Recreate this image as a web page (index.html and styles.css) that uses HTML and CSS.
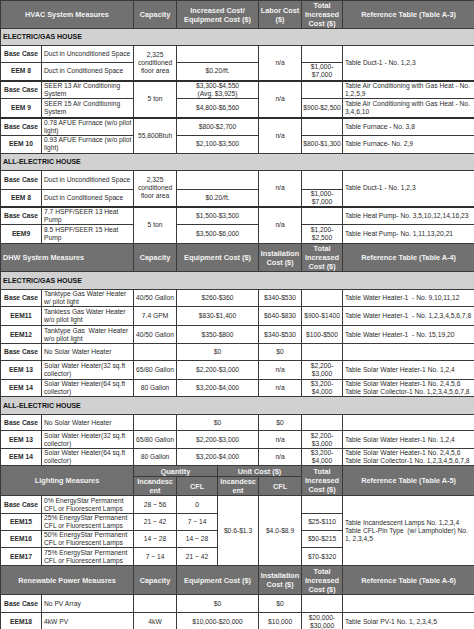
FILE: index.html
```html
<!DOCTYPE html>
<html>
<head>
<meta charset="utf-8">
<link rel="stylesheet" href="styles.css">
</head>
<body>
<table class="sheet">
<colgroup><col class="c1"><col class="c2"><col class="c3"><col class="c4a"><col class="c4b"><col class="c5"><col class="c6"><col class="c7"></colgroup>
<tbody>
<tr class="hd h28"><th colspan="2">HVAC System Measures</th><th>Capacity</th><th colspan="2">Increased Cost/<br>Equipment Cost ($)</th><th>Labor Cost<br>($)</th><th>Total<br>Increased<br>Cost ($)</th><th>Reference Table (Table A-3)</th></tr>
<tr class="sec h17"><td colspan="8">ELECTRIC/GAS HOUSE</td></tr>
<tr class="h17"><td class="id">Base Case</td><td class="desc">Duct in Unconditioned Space</td><td rowspan="2">2,325<br>conditioned<br>floor area</td><td colspan="2"></td><td rowspan="2">n/a</td><td></td><td rowspan="2" class="ref">Table Duct-1 - No. 1,2,3</td></tr>
<tr class="h18"><td class="id">EEM 8</td><td class="desc">Duct in Conditioned Space</td><td colspan="2">$0.20/ft.</td><td>$1,000-<br>$7,000</td></tr>
<tr class="h18 grp"><td class="id">Base Case</td><td class="desc">SEER 13 Air Conditioning<br>System</td><td rowspan="2">5 ton</td><td colspan="2">$3,300-$4,550<br>(Avg. $3,925)</td><td rowspan="2">n/a</td><td></td><td class="ref">Table Air Conditioning with Gas Heat - No.<br>1,2,5,9</td></tr>
<tr class="h19"><td class="id">EEM 9</td><td class="desc">SEER 15 Air Conditioning<br>System</td><td colspan="2">$4,800-$6,560</td><td>$900-$2,500</td><td class="ref">Table Air Conditioning with Gas Heat - No.<br>3,4,6,10</td></tr>
<tr class="h17 grp"><td class="id">Base Case</td><td class="desc">0.78 AFUE Furnace (w/o pilot<br>light)</td><td rowspan="2">55,800Btuh</td><td colspan="2">$800-$2,700</td><td rowspan="2">n/a</td><td></td><td class="ref">Table Furnace - No. 3,8</td></tr>
<tr class="h18"><td class="id">EEM 10</td><td class="desc">0.93 AFUE Furnace (w/o pilot<br>light)</td><td colspan="2">$2,100-$3,500</td><td>$800-$1,300</td><td class="ref">Table Furnace- No. 2,9</td></tr>
<tr class="sec h17"><td colspan="8">ALL-ELECTRIC HOUSE</td></tr>
<tr class="h19"><td class="id">Base Case</td><td class="desc">Duct in Unconditioned Space</td><td rowspan="2">2,325<br>conditioned<br>floor area</td><td colspan="2"></td><td rowspan="2">n/a</td><td></td><td rowspan="2" class="ref">Table Duct-1 - No. 1,2,3</td></tr>
<tr class="h17"><td class="id">EEM 8</td><td class="desc">Duct in Conditioned Space</td><td colspan="2">$0.20/ft.</td><td>$1,000-<br>$7,000</td></tr>
<tr class="h18 grp"><td class="id">Base Case</td><td class="desc">7.7 HSPF/SEER 13 Heat<br>Pump</td><td rowspan="2">5 ton</td><td colspan="2">$1,500-$3,500</td><td rowspan="2">n/a</td><td></td><td class="ref">Table Heat Pump- No. 3,5,10,12,14,16,23</td></tr>
<tr class="h19"><td class="id">EEM9</td><td class="desc">8.5 HSPF/SEER 15 Heat<br>Pump</td><td colspan="2">$3,500-$6,000</td><td>$1,200-<br>$2,500</td><td class="ref">Table Heat Pump- No. 1,11,13,20,21</td></tr>
<tr class="hd h27"><th colspan="2" class="left">DHW System Measures</th><th>Capacity</th><th colspan="2">Equipment Cost ($)</th><th>Installation<br>Cost ($)</th><th>Total<br>Increased<br>Cost ($)</th><th>Reference Table (Table A-4)</th></tr>
<tr class="sec h18"><td colspan="8">ELECTRIC/GAS HOUSE</td></tr>
<tr class="h17"><td class="id">Base Case</td><td class="desc">Tanktype Gas Water Heater<br>w/ pilot light</td><td>40/50 Gallon</td><td colspan="2">$260-$360</td><td>$340-$530</td><td></td><td class="ref">Table Water Heater-1&nbsp; - No. 9,10,11,12</td></tr>
<tr class="h19"><td class="id">EEM11</td><td class="desc">Tankless Gas Water Heater<br>w/o pilot light</td><td>7.4 GPM</td><td colspan="2">$830-$1,400</td><td>$640-$830</td><td>$900-$1400</td><td class="ref">Table Water Heater-1&nbsp; - No. 1,2,3,4,5,6,7,8</td></tr>
<tr class="h18"><td class="id">EEM12</td><td class="desc">Tanktype Gas&nbsp; Water Heater<br>w/o pilot light</td><td>40/50 Gallon</td><td colspan="2">$350-$800</td><td>$340-$530</td><td>$100-$500</td><td class="ref">Table Water Heater-1&nbsp; - No. 15,19,20</td></tr>
<tr class="h17"><td class="id">Base Case</td><td class="desc">No Solar Water Heater</td><td></td><td colspan="2">$0</td><td>$0</td><td></td><td class="ref"></td></tr>
<tr class="h19"><td class="id">EEM 13</td><td class="desc">Solar Water Heater(32 sq.ft<br>collector)</td><td>65/80 Gallon</td><td colspan="2">$2,200-$3,000</td><td>n/a</td><td>$2,200-<br>$3,000</td><td class="ref">Table Solar Water Heater-1 No. 1,2,4</td></tr>
<tr class="h17"><td class="id">EEM 14</td><td class="desc">Solar Water Heater(64 sq.ft<br>collector)</td><td>80 Gallon</td><td colspan="2">$3,200-$4,000</td><td>n/a</td><td>$3,200-<br>$4,000</td><td class="ref">Table Solar Water Heater-1 No. 2,4,5,6<br>Table Solar Collector-1 No. 1,2,3,4,5,6,7,8</td></tr>
<tr class="sec h18"><td colspan="8">ALL-ELECTRIC HOUSE</td></tr>
<tr class="h16"><td class="id">Base Case</td><td class="desc">No Solar Water Heater</td><td></td><td colspan="2">$0</td><td>$0</td><td></td><td class="ref"></td></tr>
<tr class="h18"><td class="id">EEM 13</td><td class="desc">Solar Water Heater(32 sq.ft<br>collector)</td><td>65/80 Gallon</td><td colspan="2">$2,200-$3,000</td><td>n/a</td><td>$2,200-<br>$3,000</td><td class="ref">Table Solar Water Heater-1 No. 1,2,4</td></tr>
<tr class="h17"><td class="id">EEM 14</td><td class="desc">Solar Water Heater(64 sq.ft<br>collector)</td><td>80 Gallon</td><td colspan="2">$3,200-$4,000</td><td>n/a</td><td>$3,200-<br>$4,000</td><td class="ref">Table Solar Water Heater-1 No. 2,4,5,6<br>Table Solar Collector-1 No. 1,2,3,4,5,6,7,8</td></tr>
<tr class="hd h11"><th colspan="2" rowspan="2">Lighting Measures</th><th colspan="2">Quantity</th><th colspan="2">Unit Cost ($)</th><th rowspan="2">Total<br>Increased<br>Cost ($)</th><th rowspan="2">Reference Table (Table A-5)</th></tr>
<tr class="hd h19"><th>Incandesc<br>ent</th><th>CFL</th><th>Incandesc<br>ent</th><th>CFL</th></tr>
<tr class="h18"><td class="id">Base Case</td><td class="desc">0% EnergyStar Permanent<br>CFL or Fluorescent Lamps</td><td>28 ~ 56</td><td>0</td><td rowspan="4">$0.6-$1.3</td><td rowspan="4">$4.0-$8.9</td><td></td><td rowspan="4" class="ref">Table Incandescent Lamps No. 1,2,3,4<br>Table CFL-Pin Type&nbsp; (w/ Lampholder) No.<br>1, 2,3,4,5</td></tr>
<tr class="h17"><td class="id">EEM15</td><td class="desc">25% EnergyStar Permanent<br>CFL or Fluorescent Lamps</td><td>21 ~ 42</td><td>7 ~ 14</td><td>$25-$110</td></tr>
<tr class="h17"><td class="id">EEM16</td><td class="desc">50% EnergyStar Permanent<br>CFL or Fluorescent Lamps</td><td>14 ~ 28</td><td>14 ~ 28</td><td>$50-$215</td></tr>
<tr class="h18"><td class="id">EEM17</td><td class="desc">75% EnergyStar Permanent<br>CFL or Fluorescent Lamps</td><td>7 ~ 14</td><td>21 ~ 42</td><td>$70-$320</td></tr>
<tr class="hd h29"><th colspan="2">Renewable Power Meausres</th><th>Capacity</th><th colspan="2">Equipment Cost ($)</th><th>Installation<br>Cost ($)</th><th>Total<br>Increased<br>Cost ($)</th><th>Reference Table (Table A-6)</th></tr>
<tr class="h18"><td class="id">Base Case</td><td class="desc">No PV Array</td><td></td><td colspan="2">$0</td><td>$0</td><td></td><td class="ref"></td></tr>
<tr class="h18"><td class="id">EEM18</td><td class="desc">4kW PV</td><td>4kW</td><td colspan="2">$10,000-$20,000</td><td>$10,000</td><td>$20,000-<br>$30,000</td><td class="ref">Table Solar PV-1 No. 1, 2,3,4,5</td></tr>
<tr class="sec h17"><td colspan="8"></td></tr>
</tbody>
</table>
</body>
</html>
```

FILE: styles.css
```css
html, body {
  margin: 0;
  padding: 0;
  background: #ffffff;
}
body {
  font-family: "Liberation Sans", Arial, sans-serif;
}
.sheet {
  border-collapse: collapse;
  table-layout: fixed;
  width: 474px;
  font-size: 6.7px;
  line-height: 8px;
  color: #2a2a2a;
}
.c1 { width: 41px; }
.c2 { width: 92px; }
.c3 { width: 43px; }
.c4a { width: 41px; }
.c4b { width: 41px; }
.c5 { width: 43px; }
.c6 { width: 41px; }
.c7 { width: 132px; }
.sheet td, .sheet th {
  border: 1px solid #3a3a3a;
  padding: 0;
  text-align: center;
  vertical-align: middle;
  white-space: nowrap;
  overflow: hidden;
}
.hd th {
  background: #717171;
  color: #f3f3f3;
  font-size: 7.3px;
  line-height: 9px;
  font-weight: bold;
}
.hd th.left {
  text-align: left;
  padding-left: 2px;
}
.sec td {
  background: #d1d1d1;
  color: #111111;
  font-weight: bold;
  font-size: 7px;
  text-align: left;
  padding-left: 2px;
}
.id {
  font-weight: bold;
}
.sheet td.desc, .sheet td.ref {
  text-align: left;
  padding-left: 2px;
}
.grp td {
  border-top: 2px solid #2e2e2e;
}
.h11 { height: 11px; }
.h16 { height: 16px; }
.h17 { height: 17px; }
.h18 { height: 18px; }
.h19 { height: 19px; }
.h27 { height: 27px; }
.h28 { height: 28px; }
.h29 { height: 29px; }
```
